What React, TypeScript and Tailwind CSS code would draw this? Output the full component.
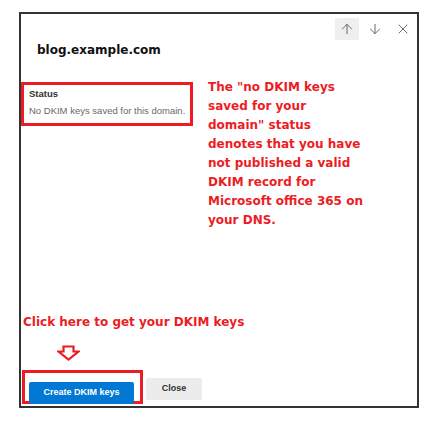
import { ArrowUp, ArrowDown, X } from 'lucide-react';

const ui = { fontFamily: '"Liberation Sans", Arial, sans-serif' };
const note = { fontFamily: '"DejaVu Sans", Verdana, sans-serif' };

export default function App() {
  return (
    <div className="w-[436px] h-[426px] bg-white pl-[19px] pt-[12px]" style={ui}>
      <div className="w-[400px] h-[396px] border-2 border-[#333333] flex flex-col pb-[2px]">
        {/* Panel header buttons */}
        <div className="flex justify-end gap-[4px] pt-[4px] pr-[2px]">
          <button className="w-[24px] h-[22px] bg-[#efefef] flex items-center justify-center text-[#605e5c]">
            <ArrowUp size={16} strokeWidth={1.4} />
          </button>
          <button className="w-[24px] h-[22px] flex items-center justify-center text-[#605e5c]">
            <ArrowDown size={16} strokeWidth={1.4} />
          </button>
          <button className="w-[24px] h-[22px] flex items-center justify-center text-[#605e5c]">
            <X size={16} strokeWidth={1.4} />
          </button>
        </div>

        <h1 className="pl-[16px] text-[12px] leading-[20px] font-bold text-[#111]" style={note}>
          blog.example.com
        </h1>

        {/* Status + annotation */}
        <div className="flex items-start mt-[18px]">
          <div className="mt-[4px] w-[172px] h-[44px] border-[3px] border-[#ed1c24] pl-[5px] pt-[2px]">
            <div className="text-[9.5px] leading-[14px] font-bold text-[#323130]">Status</div>
            <div className="mt-[3px] text-[9.5px] leading-[14px] text-[#6b6966] whitespace-nowrap">
              No DKIM keys saved for this domain.
            </div>
          </div>
          <p className="ml-[15px] text-[12px] leading-[19px] font-bold text-[#ed1c24]" style={note}>
            The "no DKIM keys
            <br />
            saved for your
            <br />
            domain" status
            <br />
            denotes that you have
            <br />
            not published a valid
            <br />
            DKIM record for
            <br />
            Microsoft office 365 on
            <br />
            your DNS.
          </p>
        </div>

        {/* Footer */}
        <div className="mt-auto">
          <p className="pl-[2px] text-[12px] leading-[19px] font-bold text-[#ed1c24]" style={note}>
            Click here to get your DKIM keys
          </p>
          <svg className="ml-[36px] mt-[13px]" width="23" height="16" viewBox="0 0 23 16">
            <polygon
              points="6.5,1.5 16.5,1.5 16.5,6.5 21.5,6.5 11.5,14.5 1.5,6.5 6.5,6.5"
              fill="none"
              stroke="#ed1c24"
              strokeWidth="2.2"
              strokeLinejoin="miter"
            />
          </svg>
          <div className="flex items-start mt-[9px]">
            <div className="ml-[1px] w-[121px] h-[34px] border-[3px] border-[#ed1c24] pl-[4px] pt-[5px]">
              <button className="w-[105px] h-[22px] rounded-[2px] bg-[#0078d4] text-white text-[9px] font-bold">
                Create DKIM keys
              </button>
            </div>
            <button className="ml-[3px] mt-[8px] w-[56px] h-[22px] rounded-[2px] bg-[#ececec] text-[#323130] text-[9px] font-bold">
              Close
            </button>
          </div>
        </div>
      </div>
    </div>
  );
}
